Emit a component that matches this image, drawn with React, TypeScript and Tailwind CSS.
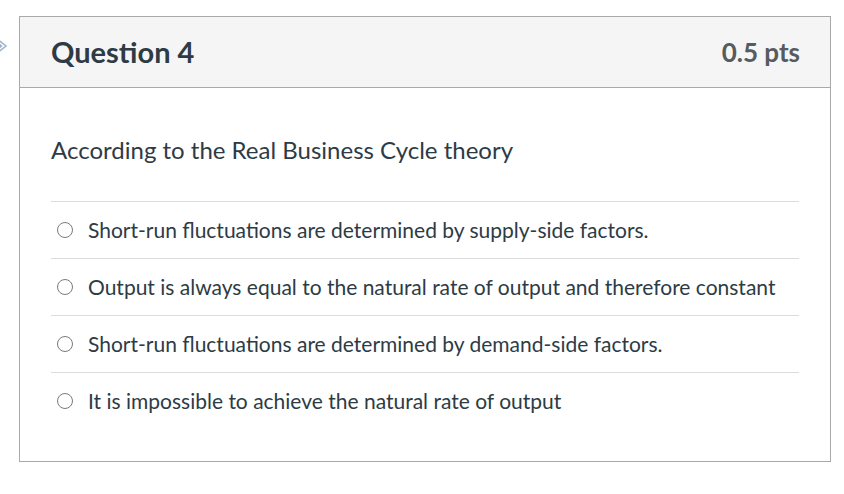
const answers = [
  "Short-run fluctuations are determined by supply-side factors.",
  "Output is always equal to the natural rate of output and therefore constant",
  "Short-run fluctuations are determined by demand-side factors.",
  "It is impossible to achieve the natural rate of output",
];

export default function App() {
  return (
    <div
      className="relative w-[844px] h-[494px] bg-white pt-[16px] pl-[19px]"
      style={{ fontFamily: "Lato, 'Noto Sans', sans-serif" }}
    >
      {/* flag chevron sticking out from the left gutter */}
      <svg
        className="absolute left-0 top-[37px]"
        width="8"
        height="18"
        viewBox="0 0 8 18"
      >
        <path
          d="M-4 1 L6 9 L-4 17 M-4 4.5 L1.5 9 L-4 13.5"
          fill="none"
          stroke="#9fb3c6"
          strokeWidth="1.5"
        />
      </svg>

      <div className="w-[812px] h-[446px] border border-[#a9a9a9]">
        <div className="h-[71px] bg-[#f5f5f5] border-b border-[#a9a9a9] flex items-center justify-between pl-[31px] pr-[30px]">
          <span className="text-[29px] font-bold text-[#2d3b45]">Question 4</span>
          <span className="text-[26px] font-bold text-[#555b60]">0.5 pts</span>
        </div>

        <div className="px-[31px]">
          <div className="pt-[47px] pb-[36px] text-[24px] leading-[30px] text-[#2d3b45]">
            According to the Real Business Cycle theory
          </div>

          <div className="flex flex-col">
            {answers.map((a) => (
              <label
                key={a}
                className="h-[57px] border-t border-[#dcdcdc] flex items-center text-[21px] text-[#2d3b45]"
              >
                <span className="ml-[6px] mr-[15px] w-[16px] h-[16px] rounded-full border-[1.5px] border-[#7a7a7a] bg-white shrink-0" />
                {a}
              </label>
            ))}
          </div>
        </div>
      </div>
    </div>
  );
}
